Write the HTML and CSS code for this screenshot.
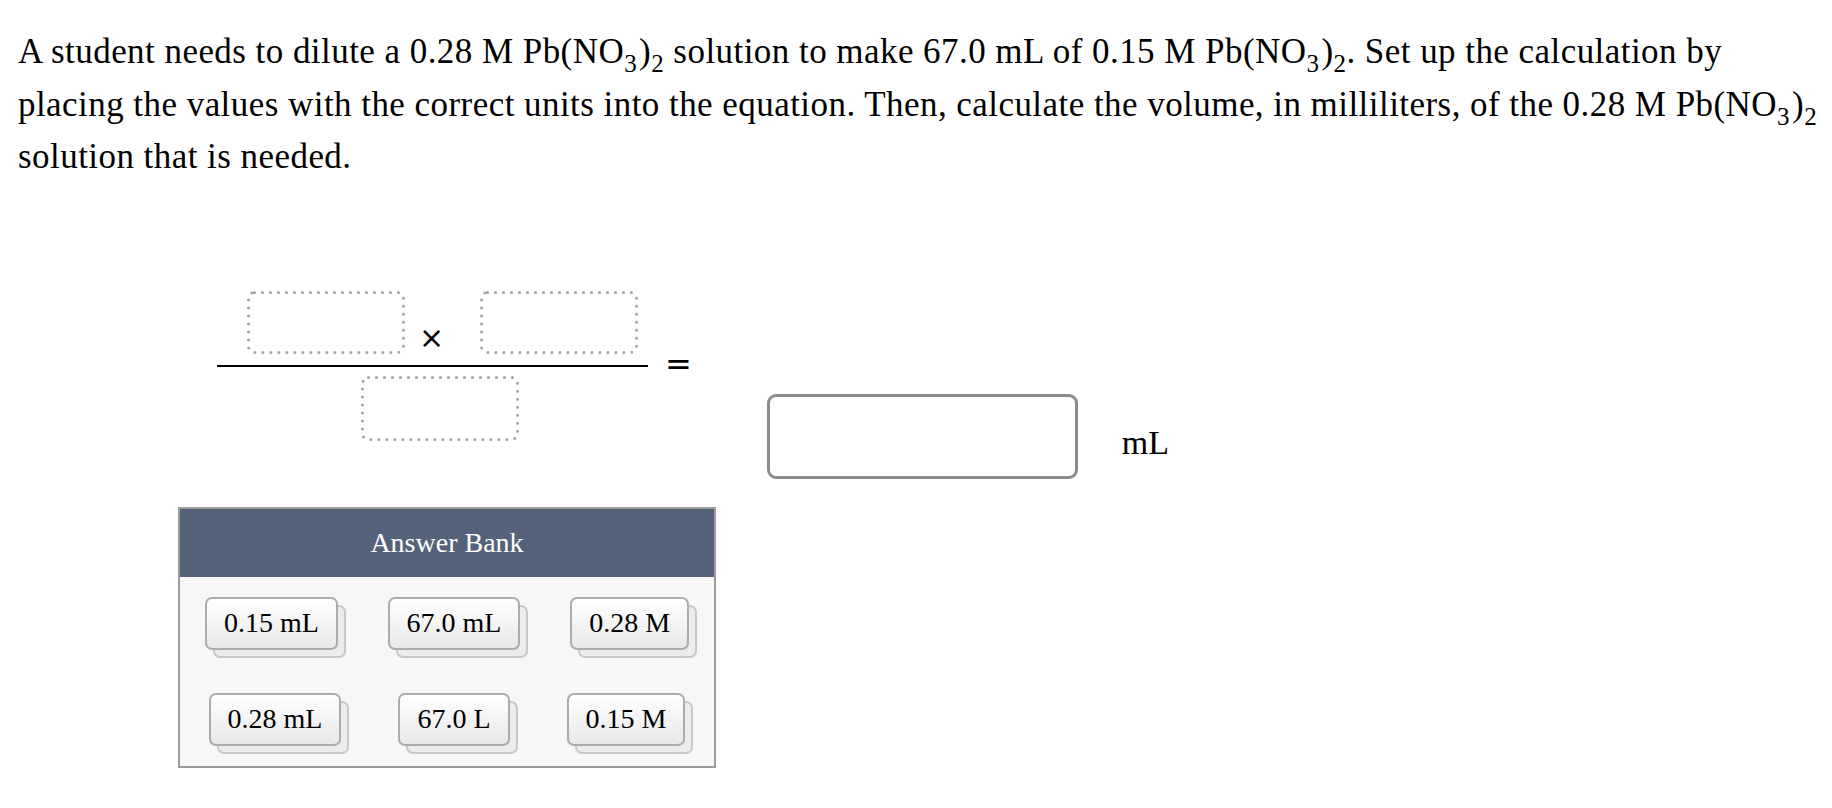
FILE: index.html
```html
<!DOCTYPE html>
<html lang="en">
<head>
<meta charset="utf-8">
<title>Dilution calculation</title>
<link rel="stylesheet" href="styles.css">
</head>
<body>
<main class="page">
  <p class="prompt">A student needs to dilute a 0.28 M Pb(NO<sub class="sub sub-gap">3</sub>)<sub class="sub">2</sub> solution to make 67.0 mL of 0.15 M Pb(NO<sub class="sub sub-gap">3</sub>)<sub class="sub">2</sub>. Set up the calculation by placing the values with the correct units into the equation. Then, calculate the volume, in milliliters, of the 0.28 M Pb(NO<sub class="sub sub-gap">3</sub>)<sub class="sub">2</sub> solution that is needed.</p>

  <div class="equation">
    <div class="fraction">
      <div class="numerator">
        <div class="slot">
          <svg class="slot-outline" viewBox="0 0 158 63" aria-hidden="true"><rect x="1.5" y="1.5" width="155" height="60" rx="6" /></svg>
        </div>
        <span class="op times">×</span>
        <div class="slot slot-low">
          <svg class="slot-outline" viewBox="0 0 158 63" aria-hidden="true"><rect x="1.5" y="1.5" width="155" height="60" rx="6" /></svg>
        </div>
      </div>
      <div class="bar"></div>
      <div class="denominator">
        <div class="slot slot-tall">
          <svg class="slot-outline" viewBox="0 0 158 65" aria-hidden="true"><rect x="1.5" y="1.5" width="155" height="62" rx="6" /></svg>
        </div>
      </div>
    </div>
    <span class="op equals">=</span>
    <div class="result">
      <input class="answer-box" type="text" aria-label="Volume in milliliters">
      <span class="unit">mL</span>
    </div>
  </div>

  <section class="bank">
    <h2 class="bank-title">Answer Bank</h2>
    <div class="bank-body">
      <div class="bank-row">
        <button class="chip" type="button">0.15 mL</button>
        <button class="chip" type="button">67.0 mL</button>
        <button class="chip" type="button">0.28 M</button>
      </div>
      <div class="bank-row">
        <button class="chip" type="button">0.28 mL</button>
        <button class="chip" type="button">67.0 L</button>
        <button class="chip" type="button">0.15 M</button>
      </div>
    </div>
  </section>
</main>
</body>
</html>
```

FILE: styles.css
```css
* {
  box-sizing: border-box;
}

html,
body {
  margin: 0;
  padding: 0;
  background: #ffffff;
}

body {
  font-family: "Liberation Serif", "Times New Roman", serif;
  color: #000000;
}

.page {
  padding: 0 8px 0 18px;
}

/* question text */
.prompt {
  margin: 26px 0 0;
  font-size: 35px;
  line-height: 52.5px;
  letter-spacing: 0.45px;
}

.sub {
  font-size: 25px;
  line-height: 1;
  vertical-align: -0.36em;
}

.sub-gap {
  margin-right: 2px;
}

/* equation: fraction = answer */
.equation {
  display: flex;
  align-items: flex-start;
  margin-top: 105px;
  padding-left: 199px;
}

.fraction {
  display: flex;
  flex-direction: column;
  width: 431px;
}

.numerator {
  display: flex;
  align-items: flex-end;
  padding-left: 30px;
}

.slot {
  width: 158px;
  height: 63px;
}

.slot-low {
  margin-top: 2px;
}

.slot-tall {
  height: 65px;
}

.slot-outline {
  display: block;
  width: 100%;
  height: 100%;
  overflow: visible;
}

.slot-outline rect {
  fill: none;
  stroke: #a3a3a3;
  stroke-width: 3;
  stroke-linecap: round;
  stroke-dasharray: 0 8;
}

.op {
  font-family: "DejaVu Sans", sans-serif;
  color: #000000;
}

.times {
  font-size: 30px;
  line-height: 30px;
  margin: 0 36px 0 14px;
  position: relative;
  top: -1px;
}

.bar {
  height: 2px;
  margin-top: 11px;
  background: #000000;
}

.denominator {
  margin-top: 9px;
  padding-left: 144px;
}

.equals {
  font-size: 32px;
  line-height: 32px;
  margin: 59px 0 0 17px;
}

.result {
  display: flex;
  align-items: center;
  margin-top: 105px;
  margin-left: 75px;
}

.answer-box {
  display: block;
  width: 311px;
  height: 85px;
  margin: 0;
  padding: 0 12px;
  border: 3px solid #8c8c8c;
  border-radius: 9px;
  background: #ffffff;
  font-family: "Liberation Serif", serif;
  font-size: 28px;
  outline: none;
}

.unit {
  font-size: 34px;
  line-height: 34px;
  margin: 13px 0 0 44px;
}

/* answer bank */
.bank {
  width: 538px;
  margin: 28px 0 0 160px;
  border: 2px solid #9c9c9c;
  background: #f7f7f7;
}

.bank-title {
  margin: 0;
  height: 68px;
  background: #546379;
  color: #ffffff;
  font-size: 28px;
  font-weight: normal;
  line-height: 68px;
  text-align: center;
}

.bank-body {
  display: flex;
  flex-direction: column;
  gap: 43px;
  padding: 20px 0;
}

.bank-row {
  display: flex;
  justify-content: space-around;
}

.chip {
  height: 53px;
  margin: 0;
  padding: 0 17px;
  border: 2px solid #acacac;
  border-radius: 7px;
  background: linear-gradient(#ffffff, #e8e8e8);
  box-shadow: 8px 8px 0 -2px #ececec, 8px 8px 0 0 #c8c8c8;
  color: #000000;
  font-family: "Liberation Serif", "Times New Roman", serif;
  font-size: 28px;
  line-height: 1;
  cursor: pointer;
}
```
